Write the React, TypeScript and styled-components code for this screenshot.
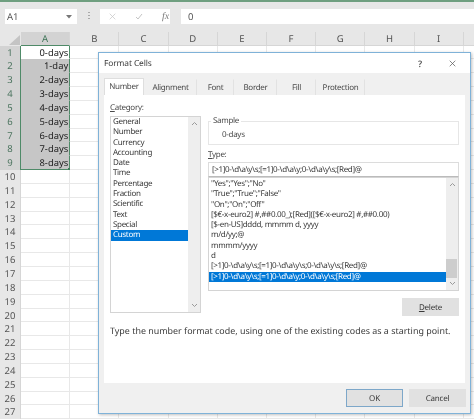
import React from "react";
import styled, { createGlobalStyle } from "styled-components";

const Global = createGlobalStyle`
  html, body { margin: 0; padding: 0; background: #fff; }
  body { font-family: "Noto Sans", "Open Sans", sans-serif; color: #3c3c3c; text-rendering: geometricPrecision; }
`;

const Page = styled.div`
  width: 474px; height: 420px; position: relative; overflow: hidden; background: #fff;
  filter: blur(0.3px);
`;
const TitleStripe = styled.div`height: 2px; background: #6f9f80;`;
const FormulaBar = styled.div`
  height: 30px; box-sizing: border-box; padding: 7px 0 8px 5px; background: #e7e7e7;
  display: flex; align-items: stretch;
`;
const NameBox = styled.div`
  width: 72px; background: #fff; display: flex; align-items: center; justify-content: space-between;
  padding: 0 5px 0 2px; box-sizing: border-box; font-size: 9.5px; color: #555;
`;
const Grip = styled.div`width: 23px; display: flex; align-items: center; justify-content: center;`;
const FxGroup = styled.div`
  width: 70px; background: #fff; display: flex; align-items: center; gap: 19px; padding-left: 9px; box-sizing: border-box;
`;
const FxText = styled.span`font-family: "Liberation Serif", serif; font-style: italic; font-size: 10px; color: #777;`;
const FormulaInput = styled.div`
  flex: 1; margin-left: 11px; background: #fff; display: flex; align-items: center; padding-left: 7px;
  font-size: 9.5px; color: #555;
`;
const Sheet = styled.div`
  display: grid; grid-template-columns: 21px repeat(10, 49.2px); grid-template-rows: 13.5px; grid-auto-rows: 13.85px;
`;
const Corner = styled.div`
  background: #e7e7e7; display: flex; justify-content: flex-end; align-items: flex-end; padding: 0 1px 1px 0;
`;
const ColHead = styled.div<{ $on?: boolean }>`
  background: ${(p) => (p.$on ? "#d3d3d3" : "#e7e7e7")}; color: ${(p) => (p.$on ? "#3d7356" : "#555")};
  border-right: 1px solid #d6d6d6; border-bottom: 1px solid ${(p) => (p.$on ? "#4f8a68" : "#d6d6d6")};
  box-sizing: border-box; font-size: 9.5px; line-height: 13px; text-align: center;
`;
const RowHead = styled.div<{ $on?: boolean }>`
  background: ${(p) => (p.$on ? "#d3d3d3" : "#e7e7e7")}; color: ${(p) => (p.$on ? "#4d7560" : "#555")};
  border-right: 1px solid ${(p) => (p.$on ? "#4f8a68" : "#d6d6d6")};
  box-sizing: border-box; font-size: 9.5px; line-height: 13.85px; text-align: center;
`;
const Cell = styled.div<{ $sel?: boolean; $fill?: boolean; $last?: boolean }>`
  box-sizing: border-box; background: ${(p) => (p.$fill ? "#c6c6c6" : "#fff")};
  border-right: 1px solid ${(p) => (p.$sel ? "#4f8a68" : "#e8e8e8")};
  border-bottom: 1px solid ${(p) => (p.$last ? "#4f8a68" : p.$sel ? "transparent" : "#e8e8e8")};
  font-size: 9.4px; line-height: 13px; text-align: right; padding-right: 1px; color: #222; position: relative;
`;
const FillHandle = styled.span`
  position: absolute; right: -2px; bottom: -2px; width: 3px; height: 3px; background: #3f7d5a;
`;

const Dialog = styled.div`
  position: absolute; left: 98px; top: 52px; width: 373px; height: 362px; box-sizing: border-box;
  border: 1px solid #7fb2d8; background: #f0f0f0; display: flex; flex-direction: column;
  box-shadow: 1px 1px 3px rgba(0,0,0,.25);
`;
const DialogTitle = styled.div`
  height: 20px; flex: none; background: #fff; display: flex; align-items: center; padding: 0 14px 0 5px;
  font-size: 8.4px; letter-spacing: -0.1px; color: #3a3a3a;
`;
const TitleName = styled.span`flex: 1;`;
const HelpMark = styled.span`margin-right: 27px; font-size: 9px; font-weight: 600; color: #555;`;
const TabStrip = styled.div`height: 22px; flex: none; display: flex; align-items: flex-end; padding-left: 5px;`;
const Tab = styled.div<{ $on?: boolean; $w: number }>`
  width: ${(p) => p.$w}px; height: ${(p) => (p.$on ? 17 : 16)}px; box-sizing: border-box; font-size: 8px; letter-spacing: -0.3px; line-height: 15px; text-align: center; color: #4a4a4a;
  background: ${(p) => (p.$on ? "#fff" : "transparent")};
  border: 1px solid ${(p) => (p.$on ? "#dedede" : "transparent")};
  border-bottom: none;
  border-right: 1px solid ${(p) => (p.$on ? "#dedede" : "#e2e2e2")};
`;
const Panel = styled.div`
  flex: 1; margin: 0 5px; background: #fff; padding: 7px 6px 0; display: flex; flex-direction: column;
`;
const Columns = styled.div`display: grid; grid-template-columns: 91px 251px; column-gap: 7px;`;
const Column = styled.div`display: flex; flex-direction: column;`;
const Label = styled.div`font-size: 8px; letter-spacing: -0.3px; line-height: 12px; color: #4a4a4a;`;
const Under = styled.span`text-decoration: underline;`;
const ListBox = styled.div<{ $h: number; $mt?: number }>`
  height: ${(p) => p.$h}px; margin-top: ${(p) => p.$mt ?? 0}px; box-sizing: border-box;
  border: 1px solid #d4d4d4; display: flex; background: #fff;
`;
const Items = styled.div<{ $pt?: number }>`flex: 1; min-width: 0; padding-top: ${(p) => p.$pt ?? 0}px; overflow: hidden;`;
const Item = styled.div<{ $on?: boolean; $pad: number }>`
  height: 10.3px; line-height: 10.3px; font-size: 8px; letter-spacing: -0.33px; white-space: nowrap; padding-left: ${(p) => p.$pad}px;
  background: ${(p) => (p.$on ? "#0078d7" : "transparent")}; color: ${(p) => (p.$on ? "#fff" : "#3a3a3a")};
`;
const ScrollBar = styled.div`
  width: 12px; flex: none; background: #eeeeee; display: flex; flex-direction: column; align-items: center; justify-content: space-between;
  padding: 4px 0; box-sizing: border-box; position: relative;
`;
const Thumb = styled.div`
  position: absolute; left: 0; right: 1px; top: 81px; height: 19px; background: #cdcdcd;
`;
const Group = styled.fieldset`
  margin: 13px 0 0; padding: 2px 0 2px 13px; border: 1px solid #e6e6e6; height: 30px; box-sizing: border-box; min-width: 0;
`;
const GroupLegend = styled.legend`font-size: 8px; letter-spacing: -0.3px; line-height: 12px; padding: 0 2px; margin-left: -11px; color: #4a4a4a;`;
const SampleValue = styled.div`font-size: 8px; letter-spacing: -0.3px; line-height: 12px; color: #4a4a4a;`;
const TypeLabel = styled(Label)`margin-top: 4px;`;
const TypeInput = styled.div`
  height: 15px; margin-top: 1px; box-sizing: border-box; border: 1px solid #dcdcdc; border-bottom-color: #bbb; padding-left: 3px;
  font-size: 8px; letter-spacing: -0.33px; line-height: 13px; color: #3a3a3a; white-space: nowrap; overflow: hidden;
`;
const ActionRow = styled.div`display: flex; justify-content: flex-end; margin-top: 7px;`;
const Button = styled.div<{ $primary?: boolean }>`
  width: 57px; height: 18px; box-sizing: border-box; background: #e1e1e1; font-size: 8px; letter-spacing: -0.2px; line-height: 17px; text-align: center; color: #3a3a3a;
  border: 1px solid ${(p) => (p.$primary ? "#7da7c9" : "#e1e1e1")};
`;
const Hint = styled.div`margin-top: 9px; font-size: 8.9px; line-height: 12px; letter-spacing: 0.02px; color: #3a3a3a; white-space: nowrap;`;
const Footer = styled.div`
  height: 30px; flex: none; display: flex; justify-content: flex-end; gap: 6px; padding: 6px 4px 0 0; box-sizing: border-box;
`;

const Chevron = ({ up }: { up?: boolean }) => (
  <svg width="7" height="5" viewBox="0 0 7 5">
    <path d={up ? "M1 4L3.5 1.5L6 4" : "M1 1L3.5 3.5L6 1"} fill="none" stroke="#9a9a9a" strokeWidth="1" />
  </svg>
);
const Cross = ({ size, color }: { size: number; color: string }) => (
  <svg width={size} height={size} viewBox="0 0 10 10">
    <path d="M1 1L9 9M9 1L1 9" fill="none" stroke={color} strokeWidth="1" />
  </svg>
);

const columns = ["B", "C", "D", "E", "F", "G", "H", "I", ""];
const values = ["0-days", "1-day", "2-days", "3-days", "4-days", "5-days", "6-days", "7-days", "8-days"];
const categories = ["General", "Number", "Currency", "Accounting", "Date", "Time", "Percentage", "Fraction", "Scientific", "Text", "Special", "Custom"];
const code = "[>1]0-\\d\\a\\y\\s;[=1]0-\\d\\a\\y;0-\\d\\a\\y\\s;[Red]@";
const formats = [
  '"Yes";"Yes";"No"',
  '"True";"True";"False"',
  '"On";"On";"Off"',
  "[$€-x-euro2] #,##0.00_);[Red]([$€-x-euro2] #,##0.00)",
  "[$-en-US]dddd, mmmm d, yyyy",
  "m/d/yy;@",
  "mmmm/yyyy",
  "d",
  "[>1]0-\\d\\a\\y\\s;[=1]0-\\d\\a\\y\\s;0-\\d\\a\\y\\s;[Red]@",
  code,
];
const tabs: [string, number][] = [["Number", 40], ["Alignment", 53], ["Font", 37], ["Border", 43], ["Fill", 39], ["Protection", 49]];

export default function App() {
  return (
    <Page>
      <Global />
      <TitleStripe />
      <FormulaBar>
        <NameBox>
          A1
          <svg width="6" height="4" viewBox="0 0 6 4"><path d="M0 0H6L3 3.5Z" fill="#777" /></svg>
        </NameBox>
        <Grip>
          <svg width="2" height="9" viewBox="0 0 2 9"><path d="M0 0h2v1H0zM0 3h2v1H0zM0 6h2v1H0z" fill="#aaa" /></svg>
        </Grip>
        <FxGroup>
          <Cross size={7} color="#c4c4c4" />
          <svg width="8" height="7" viewBox="0 0 8 7"><path d="M1 4L3 6L7 1" fill="none" stroke="#c4c4c4" strokeWidth="1" /></svg>
          <FxText>fx</FxText>
        </FxGroup>
        <FormulaInput>0</FormulaInput>
      </FormulaBar>
      <Sheet>
        <Corner>
          <svg width="11" height="10" viewBox="0 0 11 10"><path d="M11 0V10H0Z" fill="#c4c4c4" /></svg>
        </Corner>
        <ColHead $on>A</ColHead>
        {columns.map((c, i) => <ColHead key={i}>{c}</ColHead>)}
        {Array.from({ length: 27 }, (_, r) => (
          <React.Fragment key={r}>
            <RowHead $on={r < 9}>{r + 1}</RowHead>
            <Cell $sel={r < 9} $fill={r > 0 && r < 9} $last={r === 8}>
              {values[r]}
              {r === 8 && <FillHandle />}
            </Cell>
            {columns.map((_, i) => <Cell key={i} />)}
          </React.Fragment>
        ))}
      </Sheet>
      <Dialog>
        <DialogTitle>
          <TitleName>Format Cells</TitleName>
          <HelpMark>?</HelpMark>
          <Cross size={7} color="#555" />
        </DialogTitle>
        <TabStrip>
          {tabs.map(([t, w], i) => <Tab key={t} $w={w} $on={i === 0}>{t}</Tab>)}
        </TabStrip>
        <Panel>
          <Columns>
            <Column>
              <Label><Under>C</Under>ategory:</Label>
              <ListBox $h={197} $mt={2}>
                <Items>
                  {categories.map((c) => <Item key={c} $pad={2} $on={c === "Custom"}>{c}</Item>)}
                </Items>
                <ScrollBar><Chevron up /><Chevron /></ScrollBar>
              </ListBox>
            </Column>
            <Column>
              <Group>
                <GroupLegend>Sample</GroupLegend>
                <SampleValue>0-days</SampleValue>
              </Group>
              <TypeLabel><Under>T</Under>ype:</TypeLabel>
              <TypeInput>{code}</TypeInput>
              <ListBox $h={114}>
                <Items $pt={1}>
                  {formats.map((f, i) => <Item key={i} $pad={2} $on={i === 9}>{f}</Item>)}
                </Items>
                <ScrollBar><Chevron up /><Thumb /><Chevron /></ScrollBar>
              </ListBox>
              <ActionRow><Button><Under>D</Under>elete</Button></ActionRow>
            </Column>
          </Columns>
          <Hint>Type the number format code, using one of the existing codes as a starting point.</Hint>
        </Panel>
        <Footer>
          <Button $primary>OK</Button>
          <Button>Cancel</Button>
        </Footer>
      </Dialog>
    </Page>
  );
}
